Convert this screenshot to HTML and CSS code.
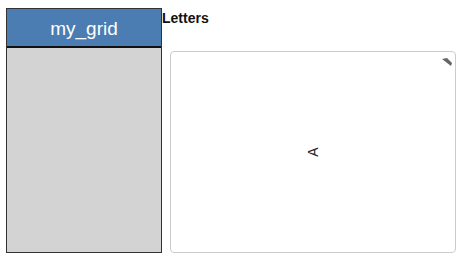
FILE: index.html
```html
<!DOCTYPE html>
<html>
<head>
<meta charset="utf-8">
<link rel="stylesheet" href="styles.css">
</head>
<body>
<div class="page">
  <div class="grid">
    <div class="grid-header">my_grid</div>
    <div class="grid-body"></div>
  </div>
  <div class="panel">
    <div class="label">Letters</div>
    <div class="textbox">
      <span class="letter">A</span>
      <svg class="grip" width="10" height="8" viewBox="0 0 10 8"><polygon points="0,1 5,0 10,5 9,8" fill="#666"/></svg>
    </div>
  </div>
</div>
</body>
</html>
```
FILE: styles.css
```css
html, body {
  margin: 0;
  padding: 0;
  background: #fff;
}
.page {
  display: flex;
  padding: 8px 0 0 6px;
  font-family: "Liberation Sans", Arial, sans-serif;
}
.grid {
  width: 156px;
  height: 245px;
  box-sizing: border-box;
  border: 1.5px solid #333;
  display: flex;
  flex-direction: column;
}
.grid-header {
  background: #4b7db3;
  border-bottom: 2px solid #111;
  color: #fff;
  font-size: 19px;
  display: flex;
  align-items: center;
  justify-content: center;
  padding-top: 2px;
  box-sizing: border-box;
  height: 39px;
}
.grid-body {
  flex: 1;
  background: #d3d3d3;
}
.panel {
  display: flex;
  flex-direction: column;
  padding-top: 2px;
}
.label {
  font-size: 14px;
  font-weight: bold;
  line-height: 16px;
  color: #111;
}
.textbox {
  position: relative;
  margin: 25px 0 0 8px;
  width: 286px;
  height: 202px;
  box-sizing: border-box;
  border: 1px solid #ccc;
  border-radius: 4px;
  display: flex;
  align-items: center;
  justify-content: center;
}
.letter {
  font-size: 14px;
  color: #222;
  transform: rotate(-90deg);
}
.grip {
  position: absolute;
  top: 6px;
  right: 3px;
}
```
